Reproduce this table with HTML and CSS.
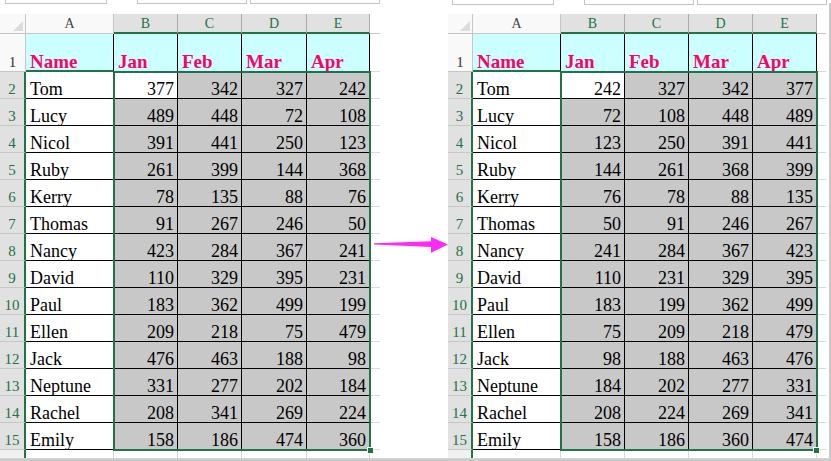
FILE: index.html
```html
<!DOCTYPE html>
<html>
<head>
<meta charset="utf-8">
<title>Sort rows</title>
<link rel="stylesheet" href="styles.css">
</head>
<body>
<div class="page">
  <div class="main">
    <div class="strip">
      <div class="seg s1"></div>
      <div class="seg s2"></div>
      <div class="seg s3"></div>
      <div class="seg s4"></div>
      <div class="seg s5"></div>
      <div class="seg s6"></div>
    </div>
    <div class="sheets">
      <div class="sheet left">
        <div class="corner"><i class="tri"></i></div>
        <div class="ch">A</div><div class="ch on">B</div><div class="ch on">C</div><div class="ch on">D</div><div class="ch on">E</div><div class="fh"></div>

        <div class="rh r1">1</div><div class="c h a1">Name</div><div class="c h">Jan</div><div class="c h">Feb</div><div class="c h">Mar</div><div class="c h">Apr</div><div class="f"></div>
        <div class="rh">2</div><div class="c t">Tom</div><div class="c n act">377</div><div class="c n">342</div><div class="c n">327</div><div class="c n">242</div><div class="f"></div>
        <div class="rh">3</div><div class="c t">Lucy</div><div class="c n">489</div><div class="c n">448</div><div class="c n">72</div><div class="c n">108</div><div class="f"></div>
        <div class="rh">4</div><div class="c t">Nicol</div><div class="c n">391</div><div class="c n">441</div><div class="c n">250</div><div class="c n">123</div><div class="f"></div>
        <div class="rh">5</div><div class="c t">Ruby</div><div class="c n">261</div><div class="c n">399</div><div class="c n">144</div><div class="c n">368</div><div class="f"></div>
        <div class="rh">6</div><div class="c t">Kerry</div><div class="c n">78</div><div class="c n">135</div><div class="c n">88</div><div class="c n">76</div><div class="f"></div>
        <div class="rh">7</div><div class="c t">Thomas</div><div class="c n">91</div><div class="c n">267</div><div class="c n">246</div><div class="c n">50</div><div class="f"></div>
        <div class="rh">8</div><div class="c t">Nancy</div><div class="c n">423</div><div class="c n">284</div><div class="c n">367</div><div class="c n">241</div><div class="f"></div>
        <div class="rh">9</div><div class="c t">David</div><div class="c n">110</div><div class="c n">329</div><div class="c n">395</div><div class="c n">231</div><div class="f"></div>
        <div class="rh">10</div><div class="c t">Paul</div><div class="c n">183</div><div class="c n">362</div><div class="c n">499</div><div class="c n">199</div><div class="f"></div>
        <div class="rh">11</div><div class="c t">Ellen</div><div class="c n">209</div><div class="c n">218</div><div class="c n">75</div><div class="c n">479</div><div class="f"></div>
        <div class="rh">12</div><div class="c t">Jack</div><div class="c n">476</div><div class="c n">463</div><div class="c n">188</div><div class="c n">98</div><div class="f"></div>
        <div class="rh">13</div><div class="c t">Neptune</div><div class="c n">331</div><div class="c n">277</div><div class="c n">202</div><div class="c n">184</div><div class="f"></div>
        <div class="rh">14</div><div class="c t">Rachel</div><div class="c n">208</div><div class="c n">341</div><div class="c n">269</div><div class="c n">224</div><div class="f"></div>
        <div class="rh">15</div><div class="c t">Emily</div><div class="c n">158</div><div class="c n">186</div><div class="c n">474</div><div class="c n">360</div><div class="f"></div>

        <div class="rh end"></div><div class="g"></div><div class="g"></div><div class="g"></div><div class="g"></div><div class="g"></div><div class="g last"></div>

        <div class="selbox"></div>
        <div class="handle"></div>
      </div>

      <div class="mid">
        <svg class="arrow" width="76" height="18" viewBox="0 0 76 18">
          <polygon points="1,7.2 58,5.2 58,1 75,8.4 58,16.8 58,11 1,8.4" fill="#ff2af5"/>
        </svg>
      </div>

      <div class="sheet right">
        <div class="corner"><i class="tri"></i></div>
        <div class="ch">A</div><div class="ch on">B</div><div class="ch on">C</div><div class="ch on">D</div><div class="ch on">E</div><div class="fh"></div>

        <div class="rh r1">1</div><div class="c h a1">Name</div><div class="c h">Jan</div><div class="c h">Feb</div><div class="c h">Mar</div><div class="c h">Apr</div><div class="f"></div>
        <div class="rh">2</div><div class="c t">Tom</div><div class="c n act">242</div><div class="c n">327</div><div class="c n">342</div><div class="c n">377</div><div class="f"></div>
        <div class="rh">3</div><div class="c t">Lucy</div><div class="c n">72</div><div class="c n">108</div><div class="c n">448</div><div class="c n">489</div><div class="f"></div>
        <div class="rh">4</div><div class="c t">Nicol</div><div class="c n">123</div><div class="c n">250</div><div class="c n">391</div><div class="c n">441</div><div class="f"></div>
        <div class="rh">5</div><div class="c t">Ruby</div><div class="c n">144</div><div class="c n">261</div><div class="c n">368</div><div class="c n">399</div><div class="f"></div>
        <div class="rh">6</div><div class="c t">Kerry</div><div class="c n">76</div><div class="c n">78</div><div class="c n">88</div><div class="c n">135</div><div class="f"></div>
        <div class="rh">7</div><div class="c t">Thomas</div><div class="c n">50</div><div class="c n">91</div><div class="c n">246</div><div class="c n">267</div><div class="f"></div>
        <div class="rh">8</div><div class="c t">Nancy</div><div class="c n">241</div><div class="c n">284</div><div class="c n">367</div><div class="c n">423</div><div class="f"></div>
        <div class="rh">9</div><div class="c t">David</div><div class="c n">110</div><div class="c n">231</div><div class="c n">329</div><div class="c n">395</div><div class="f"></div>
        <div class="rh">10</div><div class="c t">Paul</div><div class="c n">183</div><div class="c n">199</div><div class="c n">362</div><div class="c n">499</div><div class="f"></div>
        <div class="rh">11</div><div class="c t">Ellen</div><div class="c n">75</div><div class="c n">209</div><div class="c n">218</div><div class="c n">479</div><div class="f"></div>
        <div class="rh">12</div><div class="c t">Jack</div><div class="c n">98</div><div class="c n">188</div><div class="c n">463</div><div class="c n">476</div><div class="f"></div>
        <div class="rh">13</div><div class="c t">Neptune</div><div class="c n">184</div><div class="c n">202</div><div class="c n">277</div><div class="c n">331</div><div class="f"></div>
        <div class="rh">14</div><div class="c t">Rachel</div><div class="c n">208</div><div class="c n">224</div><div class="c n">269</div><div class="c n">341</div><div class="f"></div>
        <div class="rh">15</div><div class="c t">Emily</div><div class="c n">158</div><div class="c n">186</div><div class="c n">360</div><div class="c n">474</div><div class="f"></div>

        <div class="rh end"></div><div class="g"></div><div class="g"></div><div class="g"></div><div class="g"></div><div class="g"></div><div class="g last"></div>

        <div class="selbox"></div>
        <div class="handle"></div>
      </div>
    </div>
  </div>
  <div class="edge-r"></div>
  <div class="edge-b"></div>
</div>
</body>
</html>
```

FILE: styles.css
```css
* { box-sizing: border-box; }

html, body {
  margin: 0;
  padding: 0;
  background: #ffffff;
}

body {
  font-family: "Liberation Serif", "Times New Roman", serif;
  color: #000;
}

.page {
  width: 831px;
  height: 461px;
  display: grid;
  grid-template-columns: 829px 2px;
  grid-template-rows: 458px 3px;
  overflow: hidden;
}

.main {
  display: flex;
  flex-direction: column;
}

.edge-r {
  margin-top: 3px;
  background: #c9c9c9;
}

.edge-b {
  grid-column: 1 / 3;
  background: linear-gradient(#d6d6d6, #c4c4c4);
}

/* top strip remnants */
.strip {
  display: flex;
  height: 14px;
  flex: none;
}

.seg {
  height: 4px;
  border: 1px solid #c4c4c4;
  border-top: none;
}

.s1 { margin-left: 5px; width: 102px; }
.s2 { margin-left: 30px; width: 110px; }
.s3 { margin-left: 3px; width: 130px; }
.s4 { margin-left: 72px; width: 102px; height: 5px; }
.s5 { margin-left: 30px; width: 110px; height: 5px; }
.s6 { margin-left: 3px; width: 130px; height: 5px; }

.sheets {
  display: flex;
  height: 443px;
}

.sheet {
  position: relative;
  display: grid;
  grid-template-rows: 20px 38px repeat(14, 27px) 8px;
  flex: none;
}

.left {
  width: 380px;
  grid-template-columns: 26px 88px 64px 64px 65px 63px 10px;
}

.right {
  width: 378px;
  grid-template-columns: 25px 88px 64px 64px 64px 64px 9px;
}

.mid {
  width: 68px;
  flex: none;
  display: flex;
  flex-direction: column;
}

.arrow {
  display: block;
  margin-left: -7px;
  margin-top: 222px;
}

/* headers */
.corner {
  background: #f9f9f9;
  border-right: 1px solid #c6c6c6;
  border-bottom: 1px solid #c6c6c6;
  display: flex;
  justify-content: flex-end;
  align-items: flex-end;
  padding: 0 2px 2px 0;
}

.tri {
  display: block;
  width: 0;
  height: 0;
  border-left: 10px solid transparent;
  border-bottom: 10px solid #dcdcdc;
}

.ch {
  background: #f9f9f9;
  border-right: 1px solid #c6c6c6;
  border-bottom: 1px solid #c6c6c6;
  display: flex;
  justify-content: center;
  align-items: center;
  font-size: 14px;
  color: #444;
  padding-top: 1px;
}

.ch.on {
  background: #e1e1e1;
  color: #217346;
  border-right-color: #ababab;
  border-bottom: 2px solid #217346;
  padding-top: 2px;
}

.fh {
  background: #fff;
  border-bottom: 1px solid #c6c6c6;
}

.rh {
  background: #e1e1e1;
  color: #217346;
  border-right: 2px solid #217346;
  border-bottom: 1px solid #c6c6c6;
  display: flex;
  justify-content: center;
  align-items: flex-end;
  font-size: 15px;
  line-height: 16px;
  padding-bottom: 1px;
}

.rh.r1 {
  background: #f9f9f9;
  color: #333;
  border-right: 1px solid #c6c6c6;
}

.rh.end {
  background: #f0f0f0;
  border-bottom: none;
}

/* cells */
.c {
  border-right: 1px solid #000;
  border-bottom: 1px solid #000;
  font-size: 18px;
  line-height: 18px;
  display: flex;
  align-items: flex-end;
  padding: 0 3px 0 4px;
  white-space: nowrap;
  background: #fff;
}

.c.n {
  justify-content: flex-end;
  background: #c8c8c8;
}

.c.n.act {
  background: #fff;
}

.c.h {
  background: #ccffff;
  color: #ff0066;
  font-weight: bold;
  font-size: 19px;
}

.c.a1 {
  border-bottom: 2px solid #217346;
  line-height: 17px;
}

.f {
  border-bottom: 1px solid #d9d9d9;
}

.g {
  border-right: 1px solid #d9d9d9;
}

.g.last {
  border-right: none;
}

/* selection overlay */
.selbox {
  position: absolute;
  top: 57px;
  width: 258px;
  height: 380px;
  border: 2px solid #217346;
  pointer-events: none;
}

.left .selbox { left: 113px; }
.right .selbox { left: 112px; }

.handle {
  position: absolute;
  top: 433px;
  width: 7px;
  height: 7px;
  background: #217346;
  border: 1px solid #fff;
}

.left .handle { left: 367px; }
.right .handle { left: 365px; }
```
